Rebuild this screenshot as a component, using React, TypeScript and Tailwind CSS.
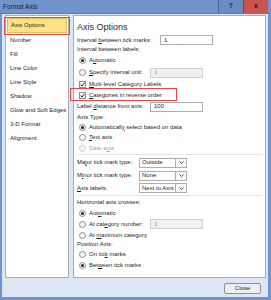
import React from "react";

type Kids = { children?: React.ReactNode };

const LEFT_ITEMS = [
  "Number",
  "Fill",
  "Line Color",
  "Line Style",
  "Shadow",
  "Glow and Soft Edges",
  "3-D Format",
  "Alignment",
];

function Radio({ checked, disabled }: { checked?: boolean; disabled?: boolean }) {
  return (
    <span
      className={`ml-[2px] flex h-[7px] w-[7px] shrink-0 items-center justify-center rounded-full border ${
        disabled ? "border-[#c9c9c9] bg-[#f6f6f6]" : "border-[#8e8f8f] bg-[#f4f4f4]"
      }`}
    >
      {checked && <span className="h-[3px] w-[3px] rounded-full bg-[#1f1f1f]" />}
    </span>
  );
}

function Check() {
  return (
    <span className="ml-[2px] flex h-[7px] w-[7px] shrink-0 items-center justify-center border border-[#8e8f8f] bg-[#f4f4f4]">
      <svg width="5" height="5" viewBox="0 0 5 5">
        <path d="M0.6 2.6 L2 4 L4.5 0.8" fill="none" stroke="#1f1f1f" strokeWidth="1" />
      </svg>
    </span>
  );
}

function TextBox({ value, w, disabled }: { value: string; w: string; disabled?: boolean }) {
  return (
    <div
      className={`flex h-[10px] items-center border pl-[3px] ${w} ${
        disabled ? "border-[#cfd1d4] bg-[#f0f0f0] text-[#a0a0a0]" : "border-[#abadb3] bg-white text-[#1e1e1e]"
      }`}
    >
      {value}
    </div>
  );
}

function Select({ value }: { value: string }) {
  return (
    <div className="flex h-[10px] w-[48px] border border-[#abadb3] bg-white">
      <span className="flex flex-1 items-center overflow-hidden whitespace-nowrap pl-[2px]">{value}</span>
      <span className="flex w-[11px] items-center justify-center border-l border-[#abadb3] bg-[#f7f7f7]">
        <svg width="5" height="3" viewBox="0 0 5 3">
          <path d="M0.5 0.5 L2.5 2.5 L4.5 0.5" fill="none" stroke="#3a3a3a" strokeWidth="0.9" />
        </svg>
      </span>
    </div>
  );
}

function Row({ h, children }: Kids & { h: string }) {
  return <div className={`relative flex items-center whitespace-nowrap ${h}`}>{children}</div>;
}

function Opt({ children }: Kids) {
  return <span className="ml-[3px]">{children}</span>;
}

function Sep() {
  return <div className="my-[1px] mr-[3px] h-px bg-[#e3e4e7]" />;
}

export default function App() {
  return (
    <div className="flex h-[300px] w-[271px] flex-col bg-[#7093cb] font-['Liberation_Sans',Arial,sans-serif] text-[6px] text-[#1e1e1e]">
      {/* title bar */}
      <div className="flex h-[14px] shrink-0 items-stretch border-b border-[#5a7bb0]">
        <div className="flex flex-1 items-center pl-[3px] text-[6.5px] text-[#14213a]">Format Axis</div>
        <div className="flex w-[25px] items-center justify-center border-l border-[#46689e] bg-[#6a8cc3] text-[7px] font-bold text-[#1b2336]">
          ?
        </div>
        <div className="flex w-[25px] items-center justify-center border-l border-[#8a3a36] bg-[#c9554e] text-[7px] font-bold text-[#2a1212]">
          x
        </div>
        <div className="w-[3px]" />
      </div>

      {/* body */}
      <div className="mb-[3px] ml-[2px] mr-[3px] flex flex-1 flex-col bg-[#dde7f3] pl-[3px] pt-[1px]">
        <div className="flex gap-[4px]">
          {/* left list */}
          <div className="h-[263px] w-[64px] border border-[#a8acb2] bg-white pt-[2px]">
            <div className="relative mx-[1px] flex h-[15px] items-center border border-[#e2bd55] bg-[#fee283] pl-[3px]">
              Axis Options
              <span className="absolute -bottom-[3px] -left-[4px] -right-[4px] -top-[2px] border-[1.5px] border-[#e2494b]" />
            </div>
            {LEFT_ITEMS.map((item) => (
              <div key={item} className="flex h-[14px] items-center pl-[4px]">
                {item}
              </div>
            ))}
          </div>

          {/* right options */}
          <div className="flex h-[263px] w-[193px] flex-col border border-[#a8acb2] bg-white pl-[3px] pt-[5px]">
            <div className="flex h-[14px] items-center text-[9px] text-[#1e2a3a]">Axis Options</div>
            <Row h="h-[10px]">
              <span className="w-[83px]">
                Interval <u>b</u>etween tick marks:
              </span>
              <TextBox value="1" w="w-[53px]" />
            </Row>
            <Row h="h-[9px]">Interval between labels:</Row>
            <Row h="h-[12px]">
              <Radio checked />
              <Opt>
                A<u>u</u>tomatic
              </Opt>
            </Row>
            <Row h="h-[13px]">
              <Radio />
              <span className="ml-[3px] w-[61px]">
                <u>S</u>pecify interval unit:
              </span>
              <TextBox value="1" w="w-[53px]" disabled />
            </Row>
            <Row h="h-[11px]">
              <Check />
              <Opt>
                <u>M</u>ulti-level Category Labels
              </Opt>
            </Row>
            <Row h="h-[11px]">
              <Check />
              <Opt>
                <u>C</u>ategories in reverse order
              </Opt>
              <span className="absolute -left-[7px] -top-[2px] h-[13px] w-[107px] border-[1.5px] border-[#e2494b]" />
            </Row>
            <Row h="h-[11px]">
              <span className="w-[73px]">
                Label <u>d</u>istance from axis:
              </span>
              <TextBox value="100" w="w-[53px]" />
            </Row>
            <Row h="h-[10px]">Axis Type:</Row>
            <Row h="h-[10px]">
              <Radio checked />
              <Opt>
                Automaticall<u>y</u> select based on data
              </Opt>
            </Row>
            <Row h="h-[11px]">
              <Radio />
              <Opt>
                <u>T</u>ext axis
              </Opt>
            </Row>
            <Row h="h-[10px]">
              <Radio disabled />
              <span className="ml-[3px] text-[#a3a3a3]">
                Date a<u>x</u>is
              </span>
            </Row>
            <Sep />
            <Row h="h-[13px]">
              <span className="w-[62px]">
                Ma<u>j</u>or tick mark type:
              </span>
              <Select value="Outside" />
            </Row>
            <Row h="h-[13px]">
              <span className="w-[62px]">
                M<u>i</u>nor tick mark type:
              </span>
              <Select value="None" />
            </Row>
            <Row h="h-[12px]">
              <span className="w-[62px]">
                <u>A</u>xis labels:
              </span>
              <Select value="Next to Axis" />
            </Row>
            <Sep />
            <Row h="h-[11px]">Horizontal axis crosses:</Row>
            <Row h="h-[10px]">
              <Radio checked />
              <Opt>
                Aut<u>o</u>matic
              </Opt>
            </Row>
            <Row h="h-[12px]">
              <Radio />
              <span className="ml-[3px] w-[61px]">
                At cat<u>e</u>gory number:
              </span>
              <TextBox value="1" w="w-[53px]" disabled />
            </Row>
            <Row h="h-[10px]">
              <Radio />
              <Opt>
                At <u>m</u>aximum category
              </Opt>
            </Row>
            <Row h="h-[9px]">Position Axis:</Row>
            <Row h="h-[11px]">
              <Radio />
              <Opt>
                On tic<u>k</u> marks
              </Opt>
            </Row>
            <Row h="h-[10px]">
              <Radio checked />
              <Opt>
                Bet<u>w</u>een tick marks
              </Opt>
            </Row>
          </div>
        </div>

        <div className="mr-[7px] mt-[5px] flex h-[11px] w-[37px] items-center justify-center self-end rounded-[2px] border border-[#8d9096] bg-[#eceef1]">
          Close
        </div>
      </div>
    </div>
  );
}
